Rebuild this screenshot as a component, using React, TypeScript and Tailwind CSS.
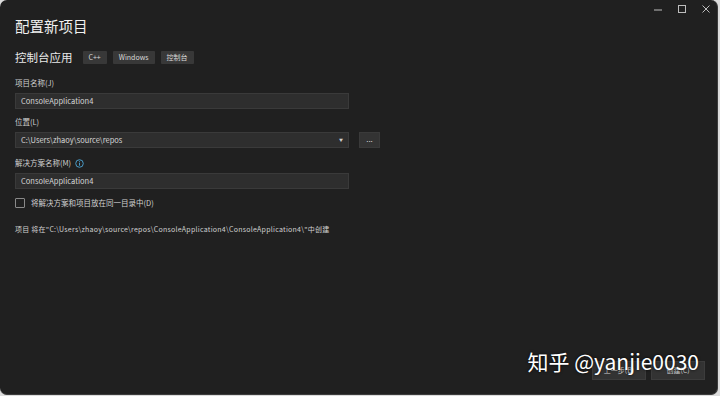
import React from 'react';

const font = { fontFamily: '"Segoe UI", "Noto Sans CJK SC", "Noto Sans", sans-serif' };

const Tag = ({ label }: { label: string }) => (
  <span className="h-[13px] px-[6px] flex items-center bg-[#383838] text-[7px] text-[#d8d8d8] rounded-[1px]">{label}</span>
);

const Field = ({ value, dropdown }: { value: string; dropdown?: boolean }) => (
  <div className="w-[334px] h-[16px] bg-[#2e2e2e] border border-[#3a3a3a] flex items-center justify-between pl-[5px] pr-[5px] text-[7.5px] text-[#d6d6d6]">
    <span>{value}</span>
    {dropdown && <span className="text-[4px] text-[#cfcfcf]">▼</span>}
  </div>
);

const Label = ({ text, info }: { text: string; info?: boolean }) => (
  <div className="flex items-center gap-[4px] text-[7.5px] text-[#d0d0d0] h-[12px]">
    <span>{text}</span>
    {info && (
      <svg width="9" height="9" viewBox="0 0 10 10">
        <circle cx="5" cy="5" r="4.2" fill="none" stroke="#4fa8d8" strokeWidth="1" />
        <rect x="4.5" y="4.2" width="1" height="3.2" fill="#4fa8d8" />
        <rect x="4.5" y="2.5" width="1" height="1" fill="#4fa8d8" />
      </svg>
    )}
  </div>
);

const App: React.FC = () => {
  return (
    <div className="w-[720px] h-[396px] bg-[#dcdcdc] overflow-hidden" style={font}>
      <div className="relative w-[718px] h-[395px] bg-[#202020] rounded-[7px] border-r border-b border-[#3c3c3c] flex flex-col">
        {/* title bar controls */}
        <div className="absolute top-[4px] right-[6px] flex items-center gap-[14px] text-[#bdbdbd]">
          <svg width="10" height="10" viewBox="0 0 10 10"><path d="M1 6h8" stroke="#bdbdbd" strokeWidth="1" /></svg>
          <svg width="10" height="10" viewBox="0 0 10 10"><rect x="1.5" y="1.5" width="7" height="7" fill="none" stroke="#bdbdbd" strokeWidth="1" /></svg>
          <svg width="10" height="10" viewBox="0 0 10 10"><path d="M1.5 1.5l7 7M8.5 1.5l-7 7" stroke="#bdbdbd" strokeWidth="1" /></svg>
        </div>

        <div className="pl-[15px] pt-[16px] flex flex-col">
          <h1 className="text-[14.5px] leading-[20px] text-[#f0f0f0]">配置新项目</h1>

          <div className="mt-[13px] flex items-center">
            <span className="text-[11.5px] leading-[16px] text-[#e8e8e8] mr-[10px]">控制台应用</span>
            <div className="flex gap-[6px]">
              <Tag label="C++" />
              <Tag label="Windows" />
              <Tag label="控制台" />
            </div>
          </div>

          <div className="mt-[12px]"><Label text="项目名称(J)" /></div>
          <div className="mt-[4px]"><Field value="ConsoleApplication4" /></div>

          <div className="mt-[7px]"><Label text="位置(L)" /></div>
          <div className="mt-[4px] flex gap-[10px]">
            <Field value="C:\Users\zhaoy\source\repos" dropdown />
            <div className="w-[21px] h-[16px] bg-[#333333] border border-[#3a3a3a] flex items-center justify-center text-[8px] text-[#d6d6d6] leading-none pb-[3px]">...</div>
          </div>

          <div className="mt-[9px]"><Label text="解决方案名称(M)" info /></div>
          <div className="mt-[4px]"><Field value="ConsoleApplication4" /></div>

          <div className="mt-[8px] flex items-center gap-[6px]">
            <div className="w-[10px] h-[10px] border border-[#8a8a8a] rounded-[1px]" />
            <span className="text-[7.5px] text-[#d0d0d0]">将解决方案和项目放在同一目录中(D)</span>
          </div>

          <div className="mt-[16px] text-[7px] tracking-[0.25px] text-[#d0d0d0]">
            项目 将在"C:\Users\zhaoy\source\repos\ConsoleApplication4\ConsoleApplication4\"中创建
          </div>
        </div>

        <div className="mt-auto mb-[14px] mr-[12px] flex justify-end gap-[5px]">
          <div className="w-[54px] h-[19px] bg-[#333333] border border-[#3c3c3c] flex items-center justify-center text-[7px] text-[#cfcfcf]">上一步(B)</div>
          <div className="w-[54px] h-[19px] bg-[#333333] border border-[#3c3c3c] flex items-center justify-center text-[7px] text-[#cfcfcf]">创建(C)</div>
        </div>

        {/* watermark */}
        <div className="absolute right-[18px] bottom-[20px] text-[21px] leading-[26px] text-white [text-shadow:0_0_3px_rgba(0,0,0,0.9)]" style={{ fontFamily: '"Noto Sans CJK SC", "Noto Sans", sans-serif' }}>
          知乎 @yanjie0030
        </div>
      </div>
    </div>
  );
};

export default App;
